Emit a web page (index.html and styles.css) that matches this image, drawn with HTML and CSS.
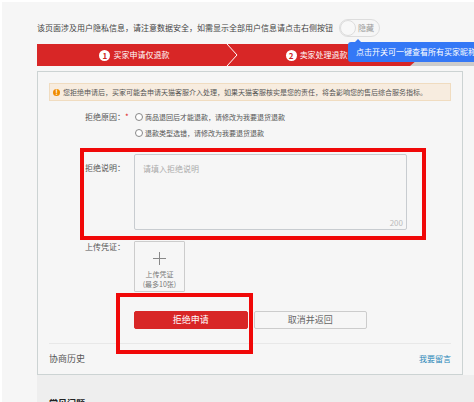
FILE: index.html
```html
<!DOCTYPE html>
<html lang="zh-CN">
<head>
<meta charset="utf-8">
<title>处理退款申请</title>
<link rel="stylesheet" href="styles.css">
</head>
<body>
<main class="page">
  <div class="privacy">
    <span>该页面涉及用户隐私信息，请注意数据安全，如需显示全部用户信息请点击右侧按钮</span>
    <div class="switch-wrap">
      <button class="switch" type="button"><span class="knob"></span>隐藏</button>
      <div class="tip">点击开关可一键查看所有买家昵称</div>
    </div>
  </div>

  <ol class="steps">
    <li class="step step-first"><span class="num">1</span>买家申请仅退款
      <svg class="chevron" viewBox="0 0 12 22"><path d="M1 0 11 11 1 22" fill="none" stroke="#fff"/></svg>
    </li>
    <li class="step step-second"><span class="num">2</span>卖家处理退款申请</li>
    <li class="step-rest"></li>
  </ol>

  <section class="panel">
    <p class="alert"><span class="alert-icon">!</span>您拒绝申请后，买家可能会申请天猫客服介入处理，如果天猫客服核实是您的责任，将会影响您的售后综合服务指标。</p>

    <form class="form">
      <div class="row">
        <span class="label">拒绝原因：<i class="required">*</i></span>
        <div class="options">
          <label class="option"><input type="radio" name="reason">商品退回后才能退款，请修改为我要退货退款</label>
          <label class="option"><input type="radio" name="reason">退款类型选错，请修改为我要退货退款</label>
        </div>
      </div>

      <div class="row row-note">
        <label class="label" for="note">拒绝说明：</label>
        <div class="note">
          <textarea id="note" placeholder="请填入拒绝说明"></textarea>
          <span class="count">200</span>
        </div>
        <div class="mark mark-note"></div>
      </div>

      <div class="row row-upload">
        <span class="label">上传凭证：</span>
        <button class="upload" type="button">
          <svg class="plus" viewBox="0 0 26 26"><path d="M13 0V26M0 13H26" stroke="#888" stroke-width="2" fill="none"/></svg>
          <span>上传凭证</span>
          <span>(最多10张)</span>
        </button>
      </div>

      <div class="actions">
        <button class="btn btn-primary" type="button">拒绝申请</button>
        <button class="btn btn-plain" type="button">取消并返回</button>
        <div class="mark mark-submit"></div>
      </div>
    </form>

    <div class="history">
      <h2>协商历史</h2>
      <a href="#message">我要留言</a>
    </div>
  </section>
  <div class="gap"></div>
  <h2 class="next">常见问题</h2>
</main>
</body>
</html>
```

FILE: styles.css
```css
* { box-sizing: border-box; }

body {
  margin: 0;
  overflow: hidden;
  height: 100vh;
  background: #fff;
  color: #555;
  font: 8px/12px "Noto Sans CJK SC", sans-serif;
}

button, textarea, input { margin: 0; font: inherit; color: inherit; }
h2, p, ol { margin: 0; padding: 0; }

.page {
  margin: 2px 0 0 2px;
  padding: 17px 0 0 35px;
  background: #f6f6f6;
}

.privacy {
  display: flex;
  align-items: center;
  gap: 6px;
  height: 18px;
  color: #444;
  white-space: nowrap;
}

.switch-wrap { position: relative; }

.switch {
  display: flex;
  align-items: center;
  gap: 2px;
  width: 41px;
  height: 18px;
  padding: 0;
  border: 1px solid #ddd;
  border-radius: 9px;
  background: #f6f6f6;
  color: #999;
}

.knob {
  width: 16px;
  height: 16px;
  border: 1px solid #ddd;
  border-radius: 50%;
  background: #f8f8f8;
}

.tip {
  position: absolute;
  z-index: 2;
  top: 23px;
  left: 9px;
  padding: 4px 8px;
  border-radius: 3px;
  background: #3478f6;
  color: #fff;
}

.tip::before {
  content: "";
  position: absolute;
  top: -3px;
  left: 7px;
  border: 3px solid transparent;
  border-top: 0;
  border-bottom-color: #3478f6;
}

.steps {
  display: flex;
  height: 22px;
  margin-top: 7px;
  background: linear-gradient(#f6f6f6 0 10px, #ccc 10px);
  list-style: none;
}

.step {
  display: flex;
  align-items: center;
  justify-content: center;
  gap: 3px;
  background: #d82626;
  color: #fff;
  white-space: nowrap;
}

.step-first { position: relative; flex: 193; }
.step-second { flex: 184; clip-path: polygon(0 0, 100% 0, 100% 70%, 96% 100%, 0 100%); }
.step-rest { flex: 56; }

.num {
  width: 11px;
  height: 11px;
  border-radius: 50%;
  background: #fff;
  color: #c22;
  font-weight: bold;
  line-height: 11px;
  text-align: center;
}

.chevron {
  position: absolute;
  z-index: 1;
  top: 0;
  right: -6px;
  width: 12px;
  height: 22px;
}

.panel {
  margin: 5px 11px 0 0;
  padding: 11px 11px 0;
  border: 1px solid #ccd3d3;
}

.alert {
  display: flex;
  align-items: center;
  gap: 3px;
  height: 18px;
  padding: 0 3px;
  border: 1px solid #f0dcc0;
  background: #f7ecdf;
  font-size: 7px;
  white-space: nowrap;
}

.alert-icon {
  width: 7px;
  height: 7px;
  border-radius: 50%;
  background: #f08c00;
  color: #fff;
  font-weight: bold;
  line-height: 7px;
  text-align: center;
}

.form { padding: 8px 0 0 36px; }

.row {
  display: grid;
  grid-template-columns: 49px 1fr;
  position: relative;
}

.label { padding-top: 2px; }
.required { color: #d22; font-style: normal; }

.option {
  display: flex;
  align-items: center;
  gap: 2px;
  height: 16px;
  padding-left: 1px;
  font-size: 7px;
}

.option input {
  appearance: none;
  width: 8px;
  height: 8px;
  border: 1px solid #888;
  border-radius: 50%;
  background: #fff;
}

.row-note { margin-top: 13px; }
.row-note .label { padding-top: 8px; }
.note { position: relative; height: 76px; margin-right: 44px; }

.note textarea {
  display: block;
  width: 100%;
  height: 100%;
  padding: 8px;
  border: 1px solid #c8ccd0;
  border-radius: 2px;
  background: transparent;
  resize: none;
}

.note textarea::placeholder { color: #aaa; }

.count {
  position: absolute;
  right: 4px;
  bottom: 1px;
  color: #bbb;
}

.mark {
  position: absolute;
  z-index: 3;
  border: 4px solid #f00808;
  pointer-events: none;
}

.mark-note { inset: -6px 25px -10px -5px; }

.row-upload { margin-top: 11px; }
.row-upload .label { padding-top: 0; }

.upload {
  display: flex;
  flex-direction: column;
  align-items: center;
  width: 51px;
  height: 51px;
  padding: 10px 0 0;
  border: 1px solid #ccc;
  border-radius: 1px;
  background: transparent;
  color: #777;
  font-size: 7px;
  line-height: 10px;
}

.plus { width: 13px; height: 13px; margin-bottom: 4px; }

.actions {
  display: flex;
  gap: 6px;
  position: relative;
  margin: 19px 84px 0 49px;
}

.btn {
  flex: 1;
  height: 18px;
  padding: 0;
  border: 1px solid #ccc;
  border-radius: 2px;
  background: transparent;
  color: #666;
  font-size: 9px;
  line-height: 14px;
}

.btn-primary { border-color: #d82626; background: #d82626; color: #fff; }
.mark-submit { top: -18px; bottom: -25px; left: -18px; right: 114px; }

.history {
  display: flex;
  align-items: center;
  justify-content: space-between;
  height: 31px;
  margin-top: 14px;
  border-top: 1px solid #e8e8e8;
}

.history h2 { font-size: 9px; font-weight: normal; }
.history a { color: #2b87b8; text-decoration: none; }

.gap { height: 23px; background: #eee; }

.next {
  padding: 0 12px;
  background: #eee;
  color: #222;
  font-size: 9px;
  line-height: 12px;
}
```
